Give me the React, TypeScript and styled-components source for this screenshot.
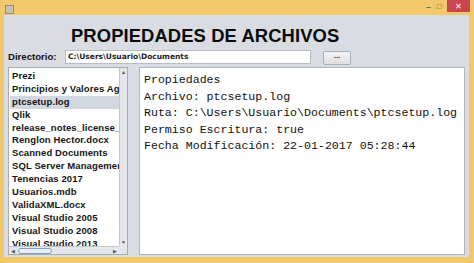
import * as React from "react";
import styled, { createGlobalStyle } from "styled-components";

const GlobalStyle = createGlobalStyle`
  html, body {
    margin: 0;
    padding: 0;
    background: #f1c86a;
    overflow: hidden;
  }
`;

const files = [
  "Prezi",
  "Principios y Valores Agiles",
  "ptcsetup.log",
  "Qlik",
  "release_notes_license_tool.txt",
  "Renglon Hector.docx",
  "Scanned Documents",
  "SQL Server Management Studio",
  "Tenencias 2017",
  "Usuarios.mdb",
  "ValidaXML.docx",
  "Visual Studio 2005",
  "Visual Studio 2008",
  "Visual Studio 2013",
];

const props = [
  "Propiedades",
  "Archivo: ptcsetup.log",
  "Ruta: C:\\Users\\Usuario\\Documents\\ptcsetup.log",
  "Permiso Escritura: true",
  "Fecha Modificación: 22-01-2017 05:28:44",
];

const Window = styled.div`
  width: 474px;
  height: 263px;
  display: flex;
  flex-direction: column;
  background: #f1c86a;
  font-family: "Liberation Sans", Arial, sans-serif;
`;

const TitleBar = styled.div`
  height: 15px;
  display: flex;
  align-items: flex-start;
  justify-content: space-between;
  padding-left: 5px;
`;

const AppIcon = styled.div`
  width: 7px;
  height: 7px;
  margin-top: 5px;
  background: #c9c2b4;
  border: 1px solid #8f8a80;
`;

const WinButtons = styled.div`
  display: flex;
  align-items: flex-start;
  margin-right: 4px;
`;

const WinBtn = styled.div<{ $close?: boolean }>`
  width: ${(p) => (p.$close ? "23px" : "11px")};
  height: 12px;
  display: flex;
  align-items: center;
  justify-content: center;
  background: ${(p) => (p.$close ? "#c9454f" : "transparent")};
  color: ${(p) => (p.$close ? "#f4d6d8" : "#555")};
  font-size: 8px;
  font-weight: bold;
  margin-left: ${(p) => (p.$close ? "2px" : "0")};
`;

const Body = styled.div`
  flex: 1;
  margin: 0 5px 6px 4px;
  background: #d9dce2;
  display: flex;
  flex-direction: column;
  min-height: 0;
`;

const Heading = styled.h1`
  margin: 8px 0 0 67px;
  height: 26px;
  font-size: 18.4px;
  line-height: 26px;
  font-weight: bold;
  color: #0b0b0b;
  letter-spacing: 0.1px;
`;

const DirRow = styled.div`
  display: flex;
  align-items: center;
  height: 17px;
  margin-top: -1px;
`;

const DirLabel = styled.label`
  width: 57px;
  padding-left: 4px;
  font-size: 9.6px;
  font-weight: bold;
  color: #111;
`;

const PathField = styled.div`
  width: 242px;
  height: 12px;
  background: #fff;
  border: 1px solid #b9bcc2;
  font-family: Tahoma, "DejaVu Sans", sans-serif;
  font-size: 7.5px;
  font-weight: bold;
  color: #222;
  line-height: 12px;
  padding-left: 2px;
  box-sizing: content-box;
`;

const BrowseBtn = styled.div`
  width: 26px;
  height: 12px;
  margin-left: 12px;
  margin-top: 2px;
  border: 1px solid #a9adb4;
  border-radius: 2px;
  background: linear-gradient(#f4f5f7, #dcdfe4);
  font-size: 8px;
  line-height: 8px;
  text-align: center;
  color: #333;
  font-weight: bold;
`;

const Main = styled.div`
  flex: 1;
  display: flex;
  gap: 11px;
  padding: 2px 4px 2px 4px;
  min-height: 0;
`;

const ListBox = styled.div`
  width: 118px;
  display: grid;
  grid-template-columns: 1fr 8px;
  grid-template-rows: 1fr 8px;
  border: 1px solid #a7abb2;
  background: #fff;
  overflow: hidden;
`;

const Items = styled.ul`
  margin: 0;
  padding: 2px 0 0 1px;
  list-style: none;
  overflow: hidden;
`;

const Item = styled.li<{ $selected?: boolean }>`
  height: 12.9px;
  line-height: 12.9px;
  padding-left: 2px;
  white-space: nowrap;
  overflow: hidden;
  font-size: 9.5px;
  font-weight: bold;
  letter-spacing: 0.1px;
  color: #151515;
  background: ${(p) => (p.$selected ? "#d3d8e0" : "transparent")};
`;

const VScroll = styled.div`
  background: #e4e6ea;
  border-left: 1px solid #c4c7cc;
  display: flex;
  flex-direction: column;
  justify-content: space-between;
  align-items: center;
  font-size: 5px;
  color: #555;
  padding: 1px 0;
`;

const HScroll = styled.div`
  grid-column: 1 / 2;
  background: #e4e6ea;
  border-top: 1px solid #c4c7cc;
  display: flex;
  align-items: center;
  padding: 0 2px;
  font-size: 5px;
  color: #555;
  gap: 3px;
`;

const HThumb = styled.div`
  width: 34px;
  height: 6px;
  border: 1px solid #7fa0c4;
  border-radius: 4px;
  background: #e9eef5;
  box-sizing: border-box;
`;

const ArrowEnd = styled.span`
  margin-left: auto;
`;

const Corner = styled.div`
  background: #e4e6ea;
`;

const Props = styled.div`
  flex: 1;
  background: #fff;
  border: 1px solid #b2b5bb;
  padding: 4px 4px;
  font-family: "Liberation Mono", "Courier New", monospace;
  font-size: 11.6px;
  color: #111;
`;

const PropLine = styled.div`
  height: 16.6px;
  line-height: 16.6px;
  white-space: pre;
`;

export default function App() {
  return (
    <Window>
      <GlobalStyle />
      <TitleBar>
        <AppIcon />
        <WinButtons>
          <WinBtn>‒</WinBtn>
          <WinBtn>□</WinBtn>
          <WinBtn $close>✕</WinBtn>
        </WinButtons>
      </TitleBar>
      <Body>
        <Heading>PROPIEDADES DE ARCHIVOS</Heading>
        <DirRow>
          <DirLabel>Directorio:</DirLabel>
          <PathField>C:\Users\Usuario\Documents</PathField>
          <BrowseBtn>...</BrowseBtn>
        </DirRow>
        <Main>
          <ListBox>
            <Items>
              {files.map((f) => (
                <Item key={f} $selected={f === "ptcsetup.log"}>
                  {f}
                </Item>
              ))}
            </Items>
            <VScroll>
              <span>▲</span>
              <span>▼</span>
            </VScroll>
            <HScroll>
              <span>◀</span>
              <HThumb />
              <ArrowEnd>▶</ArrowEnd>
            </HScroll>
            <Corner />
          </ListBox>
          <Props>
            {props.map((l) => (
              <PropLine key={l}>{l}</PropLine>
            ))}
          </Props>
        </Main>
      </Body>
    </Window>
  );
}
